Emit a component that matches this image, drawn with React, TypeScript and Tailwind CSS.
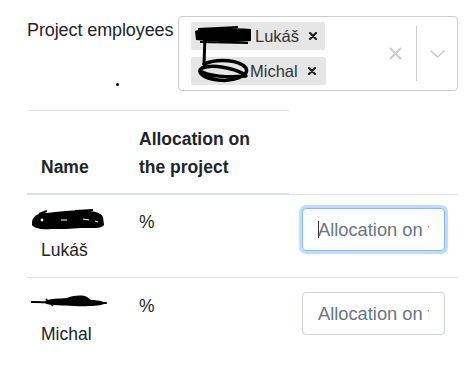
import React from "react";

const ChipX = () => (
  <svg width="8" height="8" viewBox="0 0 8 8" className="block">
    <path d="M1 1 L7 7 M7 1 L1 7" stroke="#222" strokeWidth="2.2" strokeLinecap="round" />
  </svg>
);

function Chip({ spacer, label, width }: { spacer: number; label: string; width: number }) {
  return (
    <div
      className="flex h-[28px] items-center rounded-[2px] bg-[#e6e6e6] pl-[6px] text-[16.5px] text-[#333]"
      style={{ width }}
    >
      <span className="inline-block" style={{ width: spacer }} />
      <span className="ml-[3px] leading-none">{label}</span>
      <span className="flex flex-1 items-center justify-center pl-[1px]">
        <ChipX />
      </span>
    </div>
  );
}

export default function App() {
  return (
    <div className="min-h-[367px] bg-white pl-[27px] pt-[16px] font-['Liberation_Sans',Arial,sans-serif] text-[#212529]">
      <div className="flex">
        <div className="w-[151px]">
          <div className="pt-[2px] text-[18px] leading-[25px] tracking-[-0.1px]">Project employees</div>
          <div className="ml-[89px] mt-[40px] h-[3px] w-[3px] rounded-full bg-black" />
        </div>
        <div className="relative flex h-[75px] w-[280px] rounded-[4px] border border-[#cccccc] bg-white">
          <div className="flex flex-1 flex-col items-start gap-[7px] pl-[12px] pt-[5px]">
            <Chip spacer={55} label="Lukáš" width={134} />
            <Chip spacer={50} label="Michal" width={135} />
          </div>
          <div className="flex w-[41px] items-center justify-center">
            <svg width="13" height="13" viewBox="0 0 13 13">
              <path d="M1.5 1.5 L11.5 11.5 M11.5 1.5 L1.5 11.5" stroke="#cccccc" strokeWidth="2" strokeLinecap="round" />
            </svg>
          </div>
          <div className="my-[9px] w-px bg-[#cccccc]" />
          <div className="flex w-[40px] items-center justify-center">
            <svg width="15" height="8" viewBox="0 0 15 8">
              <path d="M1 1 L7.5 7 L14 1" fill="none" stroke="#cccccc" strokeWidth="1.6" strokeLinecap="round" strokeLinejoin="round" />
            </svg>
          </div>
          <svg
            className="pointer-events-none absolute left-[-1px] top-[-1px]"
            width="120"
            height="75"
            viewBox="0 0 120 75"
          >
            <path d="M17 15 C28 11 50 12 73 13 L73 25 C55 27 35 26 18 24 Z" fill="#000" />
            <path d="M20 13 L60 11 M22 26 L70 27" stroke="#000" strokeWidth="2" />
            <path d="M27 20 L26 48" stroke="#000" strokeWidth="3" strokeLinecap="round" />
            <path
              d="M26 48 C40 42 62 44 68 52 C72 60 55 66 40 64 C25 62 18 56 24 52 C35 48 55 52 66 58 M22 55 C30 60 50 62 68 60"
              fill="none"
              stroke="#000"
              strokeWidth="3.5"
              strokeLinecap="round"
            />
          </svg>
        </div>
      </div>

      <div className="mt-[19px] w-[431px]">
        {/* header */}
        <div className="flex w-[262px] border-y border-[#dee2e6] text-[17.5px] font-bold leading-[28px]">
          <div className="flex w-[100px] items-end pb-[12px] pl-[14px]">Name</div>
          <div className="w-[162px] pb-[12px] pl-[12px] pt-[14px]">
            Allocation on
            <br />
            the project
          </div>
        </div>

        {/* row 1 */}
        <div className="flex border-t border-[#dee2e6] pb-[13px] pt-[13px] text-[17.5px] leading-[28px]">
          <div className="w-[100px] pl-[14px]">
            <div className="h-[28px]">
              <svg className="-ml-[10px] block" width="80" height="28" viewBox="0 0 80 28">
                <path
                  d="M1 14 C2 7 8 5 16 5 L24 4 C34 3 46 2 56 3 C64 3 70 5 72 9 L73 17 C70 21 62 20 50 20 C40 21 30 21 20 21 C10 22 3 20 1 17 Z"
                  fill="#000"
                />
                <path d="M8 6 L16 3 M44 3 L62 2" stroke="#000" strokeWidth="2" />
                <circle cx="11" cy="12" r="1.4" fill="#fff" />
                <path d="M30 12 L36 12 M52 11 L58 12 M64 13 L67 14" stroke="#fff" strokeWidth="1" />
              </svg>
            </div>
            <div>Lukáš</div>
          </div>
          <div className="w-[162px] pl-[12px]">%</div>
          <div className="w-[169px] pl-[13px]">
            <div className="relative">
              <input
                readOnly
                placeholder="Allocation on the project"
                className="block h-[43px] w-[143px] rounded-[4px] border border-[#80bdff] bg-white pl-[15px] pr-[15px] text-[18.3px] text-[#495057] shadow-[0_0_0_3px_rgba(0,123,255,0.25)] outline-none placeholder:text-[#6c757d]"
              />
              <span className="absolute left-[16px] top-[13px] h-[17px] w-px bg-[#333]" />
            </div>
          </div>
        </div>

        {/* row 2 */}
        <div className="flex border-t border-[#dee2e6] pb-[13px] pt-[14px] text-[17.5px] leading-[28px]">
          <div className="w-[100px] pl-[14px]">
            <div className="h-[28px]">
              <svg className="-ml-[10px] block" width="80" height="28" viewBox="0 0 80 28">
                <path d="M0 10 L75 11" stroke="#000" strokeWidth="2" strokeLinecap="round" />
                <path
                  d="M14 9 C20 6 28 7 36 6 C44 3 52 3 56 5 L60 8 C66 8 72 9 74 11 C73 13 66 14 58 14 C48 15 30 13 20 13 C15 12 13 11 14 9 Z"
                  fill="#000"
                />
                <path d="M15 7 L22 14" stroke="#000" strokeWidth="1.6" />
              </svg>
            </div>
            <div>Michal</div>
          </div>
          <div className="w-[162px] pl-[12px]">%</div>
          <div className="w-[169px] pl-[13px]">
            <input
              readOnly
              placeholder="Allocation on the project"
              className="block h-[43px] w-[143px] rounded-[4px] border border-[#ced4da] bg-white pl-[15px] pr-[15px] text-[18.3px] text-[#495057] outline-none placeholder:text-[#6c757d]"
            />
          </div>
        </div>
      </div>
    </div>
  );
}
